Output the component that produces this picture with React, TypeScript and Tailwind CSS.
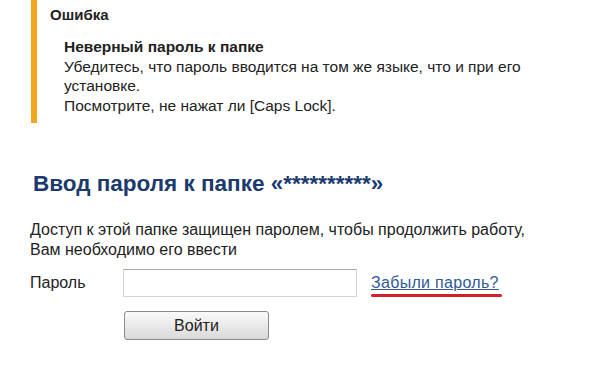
const App = () => {
  return (
    <div className="w-[600px] h-[370px] bg-white font-['Liberation_Sans',Arial,sans-serif] text-[#222] overflow-hidden">
      <div className="ml-[31px] border-l-[6px] border-[#f2a81d] pl-[13px] pt-[5px] pb-[12px] h-[123px]">
        <div className="text-[15px] font-bold leading-[20px]">Ошибка</div>
        <div className="pl-[14px] mt-[12px] text-[15.5px] leading-[19.5px]">
          <div className="font-bold">Неверный пароль к папке</div>
          <div>Убедитесь, что пароль вводится на том же языке, что и при его</div>
          <div>установке.</div>
          <div>Посмотрите, не нажат ли [Caps Lock].</div>
        </div>
      </div>

      <div className="pl-[33px] mt-[47px] text-[22.5px] font-bold text-[#1b3a6e] leading-[28px]">
        Ввод пароля к папке «**********»
      </div>

      <div className="pl-[30px] mt-[22px] text-[16px] leading-[19.5px]">
        <div>Доступ к этой папке защищен паролем, чтобы продолжить работу,</div>
        <div>Вам необходимо его ввести</div>
      </div>

      <div className="pl-[30px] mt-[10px] flex items-center">
        <label className="w-[93px] text-[16px]">Пароль</label>
        <input type="password" className="w-[234px] h-[28px] border border-[#d4d4d4] border-t-[#a8a8a8] bg-white outline-none" />
        <div className="ml-[14px] relative">
          <a href="#" className="text-[16px] tracking-[0.3px] text-[#2f5a96] underline">Забыли пароль?</a>
          <div className="absolute left-0 -right-[3px] top-[23px] h-[3px] bg-[#d21f2b] rounded-full" />
        </div>
      </div>

      <div className="pl-[124px] mt-[14px]">
        <button className="w-[145px] h-[29px] rounded-[3px] border border-[#8a8a8a] bg-gradient-to-b from-[#fafafa] to-[#d9d9d9] text-[16px] text-[#222]">
          Войти
        </button>
      </div>
    </div>
  );
};

export default App;
